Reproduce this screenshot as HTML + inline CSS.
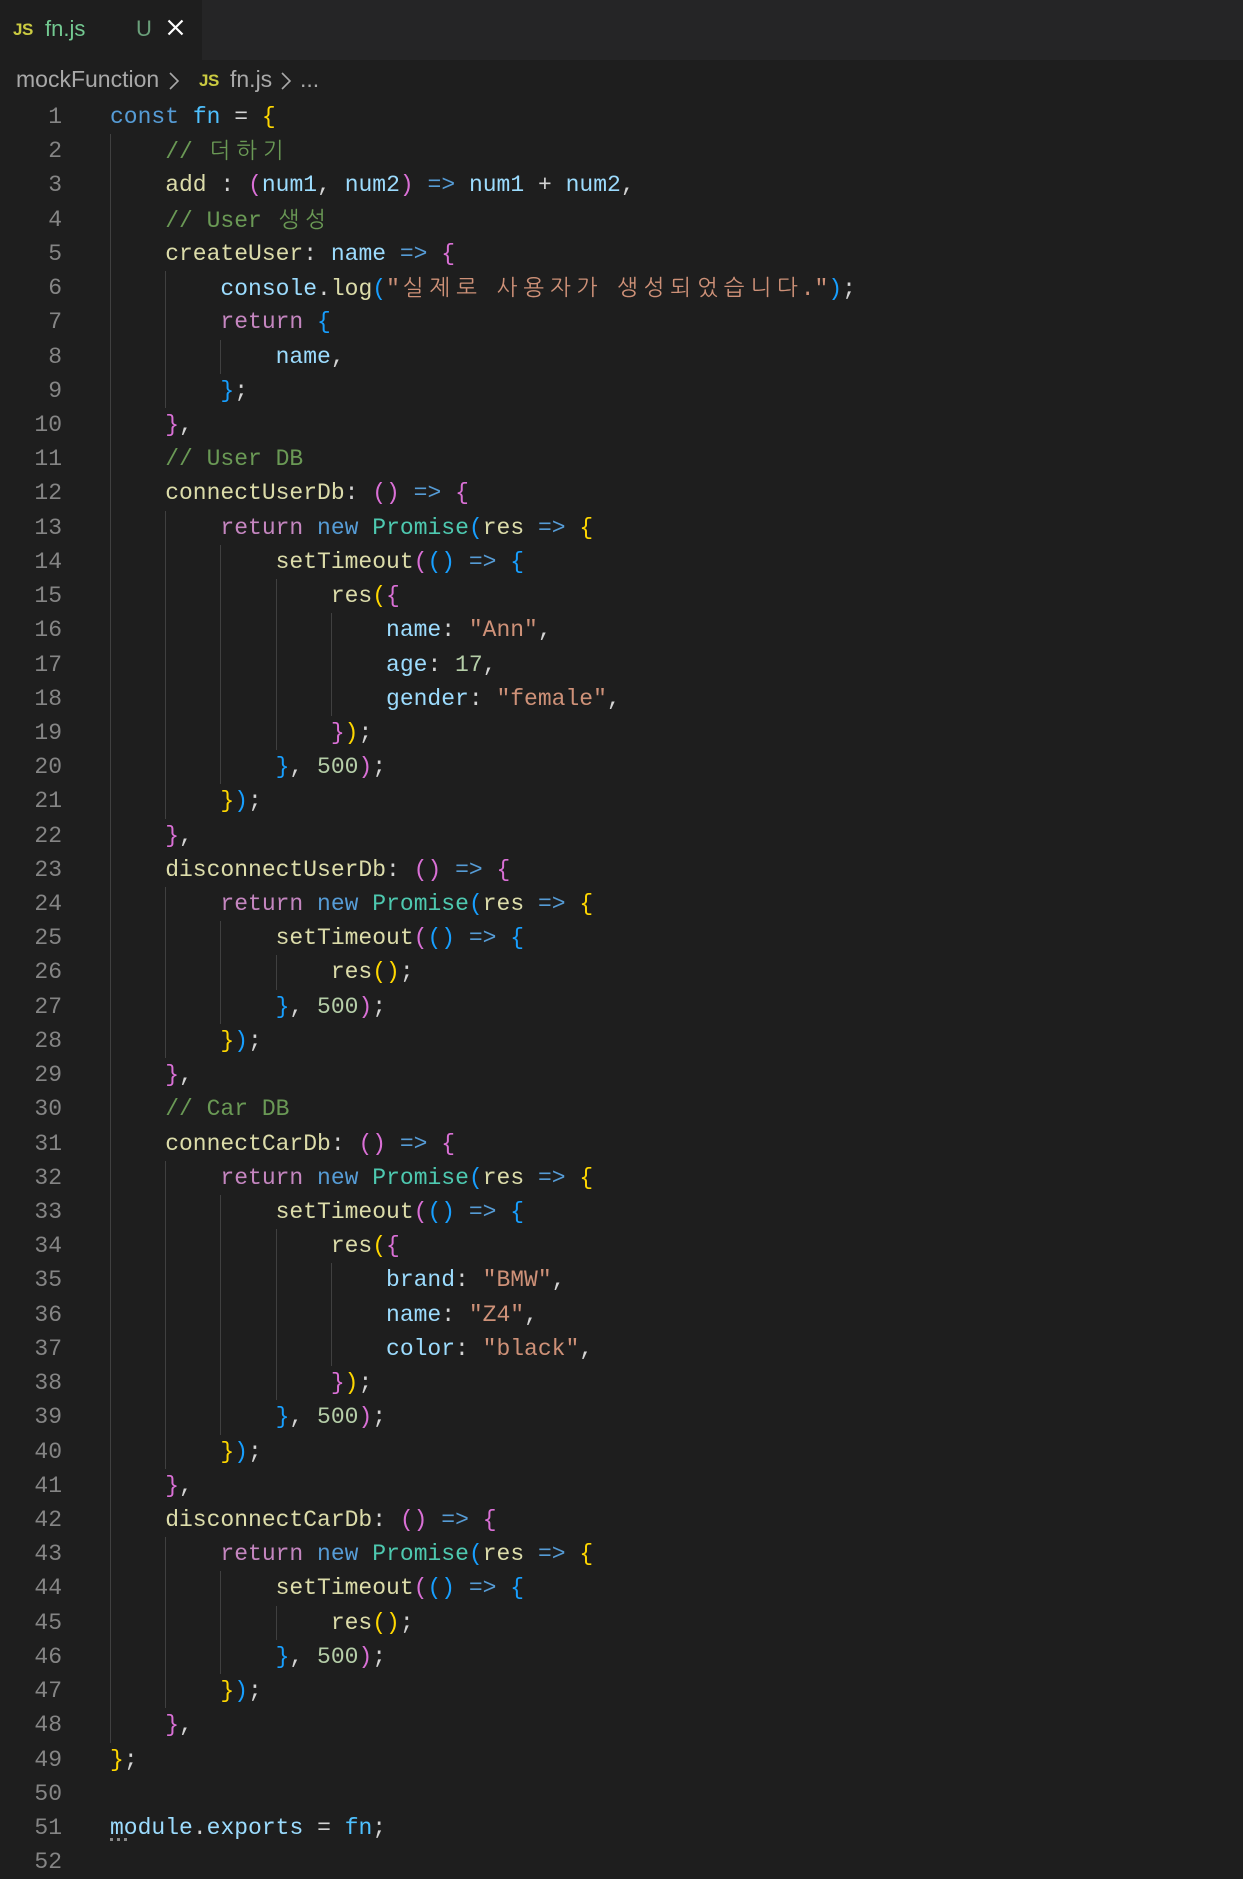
<!DOCTYPE html>
<html><head><meta charset="utf-8"><style>
html,body{margin:0;padding:0;background:#1e1e1e;width:1243px;height:1856px;overflow:hidden}
.bar{position:absolute;left:0;top:0;width:1243px;height:60px;background:#252526}
.tab{position:absolute;left:0;top:0;width:202px;height:60px;background:#1e1e1e;font-family:"Liberation Sans",sans-serif}
.js{position:absolute;font-family:"Liberation Sans",sans-serif;font-weight:bold;color:#cbcb41;font-size:17px;letter-spacing:-0.5px}
.crumb{position:absolute;left:16px;top:66px;font-family:"Liberation Sans",sans-serif;font-size:23px;color:#a9a9a9;white-space:pre}
.ln{position:absolute;left:0;width:62px;text-align:right;font-family:"Liberation Mono",monospace;font-size:23px;color:#858585;line-height:34.22px}
.code{position:absolute;left:110px;font-family:"Liberation Mono","NanumGothic",monospace;font-size:23px;color:#d4d4d4;line-height:34.22px}
.l{height:34.22px;white-space:pre}
i{display:inline-block;width:4ch;height:34.22px;vertical-align:top;box-shadow:inset 1px 0 0 #404040;font-style:normal}
.h{display:inline-block;width:2ch;text-align:center;font-family:"NanumGothic","Noto Sans CJK KR",sans-serif;font-size:22px}
.k{color:#569cd6}.c{color:#4fc1ff}.v{color:#9cdcfe}.f{color:#dcdcaa}.s{color:#ce9178}.cm{color:#6a9955}.n{color:#b5cea8}.r{color:#c586c0}.t{color:#4ec9b0}
.g{color:#ffd700}.p{color:#da70d6}.b{color:#179fff}
</style></head><body>
<div class="bar"></div>
<div class="tab">
<span class="js" style="left:13px;top:20px">JS</span>
<span style="position:absolute;left:45px;top:16px;font-size:22px;color:#73c991">fn.js</span>
<span style="position:absolute;left:136px;top:16px;font-size:22px;color:#6a9f7a">U</span>
<svg style="position:absolute;left:167px;top:19px" width="17" height="17" viewBox="0 0 17 17"><path d="M1.5 1.5L15.5 15.5M15.5 1.5L1.5 15.5" stroke="#fff" stroke-width="2.2"/></svg>
</div>
<div class="crumb">mockFunction</div>
<div class="crumb" style="left:230px">fn.js</div>
<div class="crumb" style="left:300px">...</div>
<span class="js" style="left:199px;top:71px">JS</span>
<svg style="position:absolute;left:168px;top:71px" width="12" height="20" viewBox="0 0 12 20"><path d="M2 2L10 10L2 18" stroke="#a9a9a9" stroke-width="1.6" fill="none"/></svg>
<svg style="position:absolute;left:280px;top:71px" width="12" height="20" viewBox="0 0 12 20"><path d="M2 2L10 10L2 18" stroke="#a9a9a9" stroke-width="1.6" fill="none"/></svg>
<div class="ln" style="top:100px">1<br>2<br>3<br>4<br>5<br>6<br>7<br>8<br>9<br>10<br>11<br>12<br>13<br>14<br>15<br>16<br>17<br>18<br>19<br>20<br>21<br>22<br>23<br>24<br>25<br>26<br>27<br>28<br>29<br>30<br>31<br>32<br>33<br>34<br>35<br>36<br>37<br>38<br>39<br>40<br>41<br>42<br>43<br>44<br>45<br>46<br>47<br>48<br>49<br>50<br>51<br>52</div>
<div class="code" style="top:100px">
<div class="l"><span class="k">const</span> <span class="c">fn</span> = <span class="g">{</span></div>
<div class="l"><i></i><span class="cm">// <span class="h">더</span><span class="h">하</span><span class="h">기</span></span></div>
<div class="l"><i></i><span class="f">add</span> : <span class="p">(</span><span class="v">num1</span>, <span class="v">num2</span><span class="p">)</span> <span class="k">=&gt;</span> <span class="v">num1</span> + <span class="v">num2</span>,</div>
<div class="l"><i></i><span class="cm">// User <span class="h">생</span><span class="h">성</span></span></div>
<div class="l"><i></i><span class="f">createUser</span>: <span class="v">name</span> <span class="k">=&gt;</span> <span class="p">{</span></div>
<div class="l"><i></i><i></i><span class="v">console</span>.<span class="f">log</span><span class="b">(</span><span class="s">"<span class="h">실</span><span class="h">제</span><span class="h">로</span> <span class="h">사</span><span class="h">용</span><span class="h">자</span><span class="h">가</span> <span class="h">생</span><span class="h">성</span><span class="h">되</span><span class="h">었</span><span class="h">습</span><span class="h">니</span><span class="h">다</span>."</span><span class="b">)</span>;</div>
<div class="l"><i></i><i></i><span class="r">return</span> <span class="b">{</span></div>
<div class="l"><i></i><i></i><i></i><span class="v">name</span>,</div>
<div class="l"><i></i><i></i><span class="b">}</span>;</div>
<div class="l"><i></i><span class="p">}</span>,</div>
<div class="l"><i></i><span class="cm">// User DB</span></div>
<div class="l"><i></i><span class="f">connectUserDb</span>: <span class="p">()</span> <span class="k">=&gt;</span> <span class="p">{</span></div>
<div class="l"><i></i><i></i><span class="r">return</span> <span class="k">new</span> <span class="t">Promise</span><span class="b">(</span><span class="f">res</span> <span class="k">=&gt;</span> <span class="g">{</span></div>
<div class="l"><i></i><i></i><i></i><span class="f">setTimeout</span><span class="p">(</span><span class="b">()</span> <span class="k">=&gt;</span> <span class="b">{</span></div>
<div class="l"><i></i><i></i><i></i><i></i><span class="f">res</span><span class="g">(</span><span class="p">{</span></div>
<div class="l"><i></i><i></i><i></i><i></i><i></i><span class="v">name</span>: <span class="s">"Ann"</span>,</div>
<div class="l"><i></i><i></i><i></i><i></i><i></i><span class="v">age</span>: <span class="n">17</span>,</div>
<div class="l"><i></i><i></i><i></i><i></i><i></i><span class="v">gender</span>: <span class="s">"female"</span>,</div>
<div class="l"><i></i><i></i><i></i><i></i><span class="p">}</span><span class="g">)</span>;</div>
<div class="l"><i></i><i></i><i></i><span class="b">}</span>, <span class="n">500</span><span class="p">)</span>;</div>
<div class="l"><i></i><i></i><span class="g">}</span><span class="b">)</span>;</div>
<div class="l"><i></i><span class="p">}</span>,</div>
<div class="l"><i></i><span class="f">disconnectUserDb</span>: <span class="p">()</span> <span class="k">=&gt;</span> <span class="p">{</span></div>
<div class="l"><i></i><i></i><span class="r">return</span> <span class="k">new</span> <span class="t">Promise</span><span class="b">(</span><span class="f">res</span> <span class="k">=&gt;</span> <span class="g">{</span></div>
<div class="l"><i></i><i></i><i></i><span class="f">setTimeout</span><span class="p">(</span><span class="b">()</span> <span class="k">=&gt;</span> <span class="b">{</span></div>
<div class="l"><i></i><i></i><i></i><i></i><span class="f">res</span><span class="g">()</span>;</div>
<div class="l"><i></i><i></i><i></i><span class="b">}</span>, <span class="n">500</span><span class="p">)</span>;</div>
<div class="l"><i></i><i></i><span class="g">}</span><span class="b">)</span>;</div>
<div class="l"><i></i><span class="p">}</span>,</div>
<div class="l"><i></i><span class="cm">// Car DB</span></div>
<div class="l"><i></i><span class="f">connectCarDb</span>: <span class="p">()</span> <span class="k">=&gt;</span> <span class="p">{</span></div>
<div class="l"><i></i><i></i><span class="r">return</span> <span class="k">new</span> <span class="t">Promise</span><span class="b">(</span><span class="f">res</span> <span class="k">=&gt;</span> <span class="g">{</span></div>
<div class="l"><i></i><i></i><i></i><span class="f">setTimeout</span><span class="p">(</span><span class="b">()</span> <span class="k">=&gt;</span> <span class="b">{</span></div>
<div class="l"><i></i><i></i><i></i><i></i><span class="f">res</span><span class="g">(</span><span class="p">{</span></div>
<div class="l"><i></i><i></i><i></i><i></i><i></i><span class="v">brand</span>: <span class="s">"BMW"</span>,</div>
<div class="l"><i></i><i></i><i></i><i></i><i></i><span class="v">name</span>: <span class="s">"Z4"</span>,</div>
<div class="l"><i></i><i></i><i></i><i></i><i></i><span class="v">color</span>: <span class="s">"black"</span>,</div>
<div class="l"><i></i><i></i><i></i><i></i><span class="p">}</span><span class="g">)</span>;</div>
<div class="l"><i></i><i></i><i></i><span class="b">}</span>, <span class="n">500</span><span class="p">)</span>;</div>
<div class="l"><i></i><i></i><span class="g">}</span><span class="b">)</span>;</div>
<div class="l"><i></i><span class="p">}</span>,</div>
<div class="l"><i></i><span class="f">disconnectCarDb</span>: <span class="p">()</span> <span class="k">=&gt;</span> <span class="p">{</span></div>
<div class="l"><i></i><i></i><span class="r">return</span> <span class="k">new</span> <span class="t">Promise</span><span class="b">(</span><span class="f">res</span> <span class="k">=&gt;</span> <span class="g">{</span></div>
<div class="l"><i></i><i></i><i></i><span class="f">setTimeout</span><span class="p">(</span><span class="b">()</span> <span class="k">=&gt;</span> <span class="b">{</span></div>
<div class="l"><i></i><i></i><i></i><i></i><span class="f">res</span><span class="g">()</span>;</div>
<div class="l"><i></i><i></i><i></i><span class="b">}</span>, <span class="n">500</span><span class="p">)</span>;</div>
<div class="l"><i></i><i></i><span class="g">}</span><span class="b">)</span>;</div>
<div class="l"><i></i><span class="p">}</span>,</div>
<div class="l"><span class="g">}</span>;</div>
<div class="l"></div>
<div class="l"><span class="v">module</span>.<span class="v">exports</span> = <span class="c">fn</span>;</div>
</div>
<div style="position:absolute;left:110px;top:1838px;width:20px;height:3px;background:repeating-linear-gradient(90deg,#8a8a8a 0 3px,transparent 3px 7px)"></div>
</body></html>
